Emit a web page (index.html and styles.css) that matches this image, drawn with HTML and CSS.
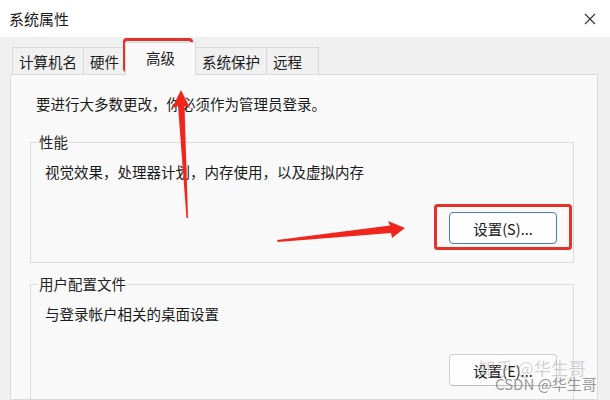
FILE: index.html
```html
<!DOCTYPE html>
<html>
<head>
  <meta charset="UTF-8">
  <link rel="stylesheet" href="styles.css">
</head>
<body>
  <div class="window">
    <div class="titlebar">
      <span class="title">系统属性</span>
      <svg class="close" width="12" height="12" viewBox="0 0 12 12">
        <path d="M1 1 L11 11 M11 1 L1 11" stroke="#333" stroke-width="1.1" fill="none"/>
      </svg>
    </div>

    <div class="main">
      <div class="tabs">
        <div class="tab">计算机名</div>
        <div class="tab">硬件</div>
        <div class="tab active">高级</div>
        <div class="tab">系统保护</div>
        <div class="tab last">远程</div>
      </div>

      <div class="panel">
        <p class="intro">要进行大多数更改，你必须作为管理员登录。</p>

        <fieldset class="group">
          <legend>性能</legend>
          <p class="desc">视觉效果，处理器计划，内存使用，以及虚拟内存</p>
          <div class="actions">
            <button class="btn focused">设置(S)...</button>
          </div>
        </fieldset>

        <fieldset class="group second">
          <legend>用户配置文件</legend>
          <p class="desc">与登录帐户相关的桌面设置</p>
          <div class="actions">
            <button class="btn">设置(E)...</button>
          </div>
        </fieldset>
      </div>
    </div>

    <div class="watermark ghost">知乎 @华生哥</div>
    <div class="watermark">CSDN @华生哥</div>

    <svg class="marks" width="610" height="400" viewBox="0 0 610 400">
      <rect x="124.5" y="39.5" width="67" height="31" rx="2" fill="none" stroke="#e4322b" stroke-width="3"/>
      <rect x="435.5" y="205.5" width="135" height="43" rx="2" fill="none" stroke="#e4322b" stroke-width="3"/>
      <polygon points="181,90 190,108 184.5,106 188,218 186.5,218 178,106 172,108" fill="#f0261c"/>
      <polygon points="277,240 390,225.5 388,221 405,228 392,238 391,233 278,242" fill="#f0261c"/>
    </svg>
  </div>
</body>
</html>
```

FILE: styles.css
```css
* {
  margin: 0;
  padding: 0;
  box-sizing: border-box;
}

body {
  font-family: "Noto Sans CJK SC", "Noto Sans", sans-serif;
  font-size: 14.5px;
  line-height: 20px;
  color: #1a1a1a;
  background: #f0f0f0;
}

.window {
  position: relative;
  width: 610px;
  height: 400px;
  overflow: hidden;
}

.titlebar {
  height: 37px;
  background: #ffffff;
  display: flex;
  align-items: center;
  justify-content: space-between;
  padding: 0 14px 0 9px;
}

.title {
  font-size: 15px;
}

.close {
  display: block;
}

.main {
  height: 363px;
  background: #f0f0f0;
  padding: 0 12px 0 10px;
}

.tabs {
  height: 37px;
  display: flex;
  align-items: flex-end;
  padding-left: 2px;
}

.tab {
  height: 27px;
  padding: 0 6px;
  border: 1px solid #d9d9d9;
  border-bottom: none;
  margin-right: -1px;
  background: #f0f0f0;
  display: flex;
  align-items: center;
  padding-top: 2px;
}

.tab.active {
  position: relative;
  z-index: 1;
  height: 33px;
  margin-bottom: -1px;
  padding: 0 20px 3px;
  background: #f9f9f9;
}

.tab.last {
  padding-right: 16px;
}

.panel {
  height: 326px;
  background: #f9f9f9;
  border: 1px solid #dadada;
  padding: 19px 23px 0 19px;
}

.intro {
  padding-left: 6px;
}

.group {
  margin-top: 18px;
  border: 1px solid #dcdcdc;
  padding: 10px 16px 18px 7px;
  min-inline-size: 0;
}

.group.second {
  margin-top: 11px;
  padding-bottom: 40px;
}

.group legend {
  padding: 0 1px;
  color: #222;
}

.desc {
  padding-left: 7px;
}

.actions {
  margin-top: 30px;
  display: flex;
  justify-content: flex-end;
}

.btn {
  width: 108px;
  height: 32px;
  font-family: inherit;
  font-size: 14.5px;
  color: #1a1a1a;
  background: #fdfdfd;
  border: 1px solid #d0d0d0;
  border-bottom-color: #bdbdbd;
  border-radius: 4px;
}

.btn.focused {
  border: 1px solid #4a7fa0;
}

.watermark {
  position: absolute;
  left: 495px;
  top: 374px;
  font-size: 15px;
  color: rgba(120, 120, 120, 0.75);
  white-space: nowrap;
}

.watermark.ghost {
  left: 478px;
  top: 358px;
  font-size: 17.5px;
  color: rgba(170, 170, 170, 0.5);
}

.marks {
  position: absolute;
  top: 0;
  left: 0;
  pointer-events: none;
}
```
